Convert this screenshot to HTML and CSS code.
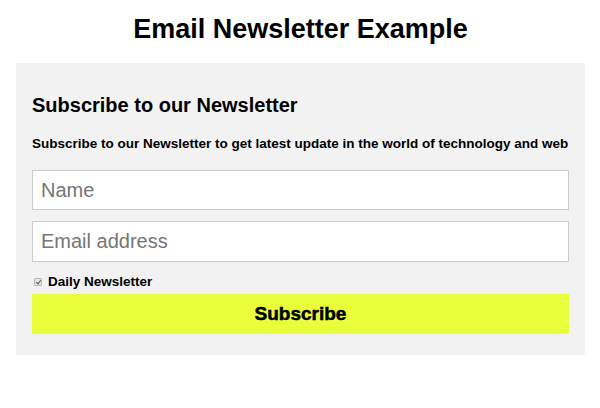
FILE: index.html
```html
<!DOCTYPE html>
<html>
<head>
<meta charset="utf-8">
<link rel="stylesheet" href="styles.css">
</head>
<body>
<h1 class="title">Email Newsletter Example</h1>
<form class="box">
  <h2 class="box-heading">Subscribe to our Newsletter</h2>
  <p class="box-text">Subscribe to our Newsletter to get latest update in the world of technology and web</p>
  <input class="field" type="text" placeholder="Name">
  <input class="field" type="text" placeholder="Email address">
  <label class="check-row"><input class="check" type="checkbox" checked> Daily Newsletter</label>
  <button class="btn" type="button">Subscribe</button>
</form>
</body>
</html>
```
FILE: styles.css
```css
html, body {
  margin: 0;
  padding: 0;
  background: #fff;
  font-family: "Liberation Sans", Arial, sans-serif;
  color: #000;
}
body {
  padding: 0 15px 0 16px;
}
.title {
  margin: 0;
  padding-top: 14px;
  height: 49px;
  font-size: 27px;
  line-height: 30px;
  text-align: center;
  font-weight: bold;
}
.box {
  background: #f2f2f2;
  padding: 30px 16px 21px 16px;
  display: flex;
  flex-direction: column;
}
.box-heading {
  margin: 0;
  font-size: 20px;
  line-height: 24px;
  font-weight: bold;
}
.box-text {
  margin: 19px 0 0 0;
  font-size: 13.5px;
  line-height: 16px;
  font-weight: bold;
}
.field {
  box-sizing: border-box;
  margin: 18px 0 0 0;
  height: 40px;
  border: 1px solid #cccccc;
  background: #fff;
  padding: 0 8px;
  font-family: "Liberation Sans", Arial, sans-serif;
  font-size: 20px;
  color: #000;
  outline: none;
}
.field::placeholder {
  color: #757575;
}
.field + .field {
  margin-top: 11px;
  height: 41px;
}
.check-row {
  display: flex;
  align-items: center;
  margin-top: 12px;
  font-size: 13.5px;
  font-weight: bold;
  line-height: 16px;
}
.check {
  -webkit-appearance: none;
  appearance: none;
  box-sizing: border-box;
  width: 8px;
  height: 8px;
  margin: 0 6px 0 2px;
  border: 1px solid #b5b5b5;
  background: #e6e6e6;
  border-radius: 1px;
  position: relative;
}
.check:checked::after {
  content: "";
  position: absolute;
  left: 1.5px;
  top: 0;
  width: 2px;
  height: 4px;
  border: solid #555;
  border-width: 0 1px 1px 0;
  transform: rotate(40deg);
}
.btn {
  margin-top: 4px;
  height: 40px;
  border: none;
  background: #eaff3c;
  font-family: "Liberation Sans", Arial, sans-serif;
  font-size: 19px;
  font-weight: 900;
  color: #000;
  -webkit-text-stroke: 0.5px #000;
}
```
